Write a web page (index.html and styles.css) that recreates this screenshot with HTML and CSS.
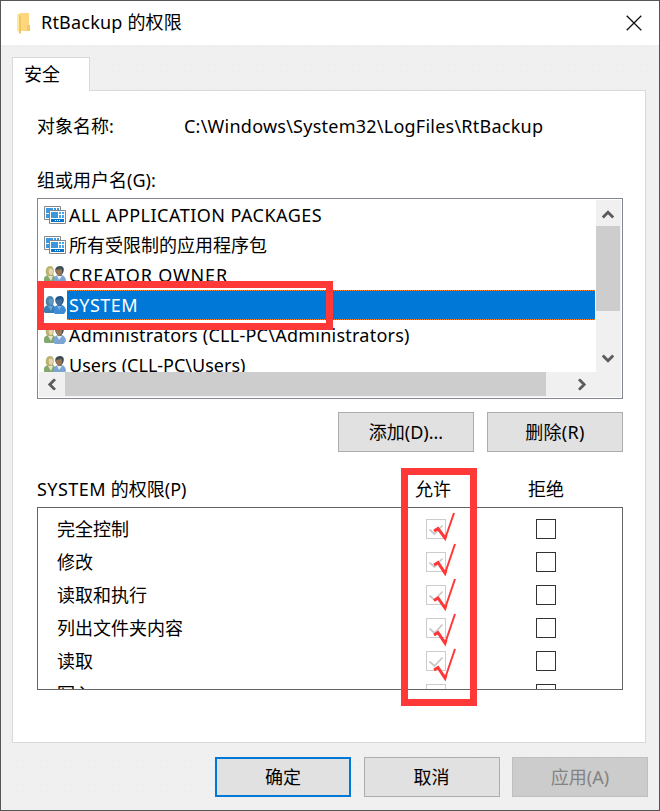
FILE: index.html
```html
<!DOCTYPE html>
<html lang="zh-CN">
<head>
<meta charset="utf-8">
<title>RtBackup 的权限</title>
<link rel="stylesheet" href="styles.css">
</head>
<body>
<svg class="defs" width="0" height="0">
  <symbol id="package" viewBox="0 0 22 18">
    <path d="M.5 .5h16v13h-16z" fill="#fff" stroke="#858585"/>
    <path d="M2 2h7v5H2zM2 8h4v4H2z" fill="#3a96dd"/><path d="M10 2h2v2h-2zM13 2h2v2h-2z" fill="#3a96dd"/>
    <path d="M5.500 4.500h16v13h-16z" fill="#fff" stroke="#858585"/>
    <path d="M7 6h7v6H7z" fill="#3a96dd"/><path d="M15 6h2v2h-2zM18 6h2v2h-2zM15 9h2v3h-2zM18 9h2v3h-2z" fill="#4aa5e5"/>
    <path d="M7 13h13v3H7z" fill="#0874c9"/><path d="M11 14h1v1h-1zM13 14h1v1h-1zM15 14h1v1h-1z" fill="#fff"/>
  </symbol>
  <symbol id="users" viewBox="0 0 22 18">
    <path d="M0 16v-3c0-2 1-3 4-4h5c2 1 3 3 3 8H1z" fill="#83a86d"/>
    <path d="M2 8C1 3 3 0 6 0s5 3 3 9l-4 2z" fill="#b9b36f"/>
    <path d="M5 3c2-1 4 0 4 2s-1 4-2 4-3-2-2-6z" fill="#e9d4b4"/>
    <path d="M4 10l3 5 2-5z" fill="#ece3cf"/>
    <path d="M10 17v-4c0-2 2-4 5-4h3c3 1 4 4 4 6l-2 3h-9z" fill="#7da5d3"/>
    <path d="M12 7c-2-4 0-7 4-7 3 0 5 2 3 7l-3 4z" fill="#3f4f55"/>
    <path d="M12 4c2 0 3-1 5-1 2 2 1 6-1 7-2 0-4-2-4-6z" fill="#9b7550"/>
    <path d="M13 10l2 4 3-4z" fill="#e6eef5"/>
  </symbol>
  <symbol id="users-selected" viewBox="0 0 22 18">
    <path d="M0 16v-3c0-2 1-3 4-4h5c2 1 3 3 3 8H1z" fill="#397eb2"/>
    <path d="M2 8C1 3 3 0 6 0s5 3 3 9l-4 2z" fill="#4b83a9"/>
    <path d="M5 3c2-1 4 0 4 2s-1 4-2 4-3-2-2-6z" fill="#629bc0"/>
    <path d="M4 10l3 5 2-5z" fill="#6ca6d4"/>
    <path d="M10 17v-4c0-2 2-4 5-4h3c3 1 4 4 4 6l-2 3h-9z" fill="#3d8dd6"/>
    <path d="M12 7c-2-4 0-7 4-7 3 0 5 2 3 7l-3 4z" fill="#20568c"/>
    <path d="M12 4c2 0 3-1 5-1 2 2 1 6-1 7-2 0-4-2-4-6z" fill="#416f98"/>
    <path d="M13 10l2 4 3-4z" fill="#72b2e9"/>
  </symbol>
  <symbol id="up" viewBox="0 0 12 9"><path d="M.8 7.500L6 2.300l5.200 5.200" fill="none" stroke="#5c5c5c" stroke-width="2.800"/></symbol>
  <symbol id="down" viewBox="0 0 12 9"><path d="M.8 1.500L6 6.700l5.200-5.200" fill="none" stroke="#5c5c5c" stroke-width="2.800"/></symbol>
  <symbol id="tick" viewBox="0 0 18 18"><path d="M2.500 9.500l5 4.500 8-8.500" fill="none" stroke="#c8c8c8" stroke-width="1.700"/></symbol>
</svg>
<div class="window">
  <header class="titlebar">
    <svg class="folder" width="15" height="21" viewBox="0 0 15 21"><path d="M1 1l4-1v19l-4-1z" fill="#ffe8a0"/><path d="M4 0h9v12l1 1v5H4z" fill="#fcd77d"/><path d="M3 1l2 3v16l-2 1z" fill="#f4c45e"/><path d="M11 12h3v6h-3z" fill="#f5c866"/></svg>
    <h1 class="title">RtBackup 的权限</h1>
    <svg class="close" width="16" height="16" viewBox="0 0 16 16"><path d="M.7 .7l14.600 14.600M15.300 .7L.7 15.300" stroke="#111" stroke-width="1.300"/></svg>
  </header>
  <div class="tab">安全</div>
  <main class="panel">
    <div class="object"><span class="object-label">对象名称:</span><span class="path">C:\Windows\System32\LogFiles\RtBackup</span></div>
    <div class="group-label">组或用户名(G):</div>
    <div class="list">
      <div class="list-main">
        <ul class="rows">
          <li><svg><use href="#package"/></svg><span class="name caps">ALL APPLICATION PACKAGES</span></li>
          <li><svg><use href="#package"/></svg><span class="name">所有受限制的应用程序包</span></li>
          <li><svg><use href="#users"/></svg><span class="name creator">CREATOR OWNER</span></li>
          <li class="selected"><svg><use href="#users-selected"/></svg><span class="name caps">SYSTEM</span></li>
          <li><svg><use href="#users"/></svg><span class="name path">Administrators (CLL-PC\Administrators)</span></li>
          <li><svg><use href="#users"/></svg><span class="name">Users (CLL-PC\Users)</span></li>
        </ul>
        <div class="vbar"><svg class="arrow"><use href="#up"/></svg><div class="thumb"></div><svg class="arrow end"><use href="#down"/></svg></div>
      </div>
      <div class="hbar"><svg class="arrow left"><use href="#up"/></svg><div class="hthumb"></div><svg class="arrow right"><use href="#up"/></svg></div>
      <div class="mark mark-user"></div>
    </div>
    <div class="actions"><button>添加(D)...</button><button class="remove">删除(R)</button></div>
    <div class="perm-area">
      <div class="perm-head"><span class="perm-title"><span class="caps">SYSTEM</span> 的权限(P)</span><span class="allow">允许</span><span class="deny">拒绝</span></div>
      <div class="perms">
        <ul class="perm-rows">
          <li><span>完全控制</span><i class="box off"><svg><use href="#tick"/></svg></i><i class="box"></i></li>
          <li><span>修改</span><i class="box off"><svg><use href="#tick"/></svg></i><i class="box"></i></li>
          <li><span>读取和执行</span><i class="box off"><svg><use href="#tick"/></svg></i><i class="box"></i></li>
          <li><span>列出文件夹内容</span><i class="box off"><svg><use href="#tick"/></svg></i><i class="box"></i></li>
          <li><span>读取</span><i class="box off"><svg><use href="#tick"/></svg></i><i class="box"></i></li>
          <li><span>写入</span><i class="box off"></i><i class="box"></i></li>
        </ul>
        <div class="vbar"><svg class="arrow"><use href="#up"/></svg><div class="thumb"></div><svg class="arrow end"><use href="#down"/></svg></div>
      </div>
      <div class="mark mark-allow"></div>
      <svg class="checks" width="30" height="180" viewBox="430 507 30 180" fill="none" stroke="#ff3838" stroke-width="2">
        <path d="M445 539L454 513M445 573.500L455 544M445 608.500L455 579M445 643.500L455 614M445 678.500L455 649"/>
        <path stroke-width="3" d="M434 531l4-2.500 7 9.500 1-3M434 565l4-2.500 7 10.500 1-3M434 600.500l4-2.500 7 10 1-3M434 635l4-2.500 7 10.500 1-3M434 670l4-2.500 7 10.500 1-3"/>
      </svg>
    </div>
  </main>
  <footer class="footer"><button class="primary">确定</button><button>取消</button><button class="disabled" disabled>应用(A)</button></footer>
</div>
</body>
</html>
```
FILE: styles.css
```css
* { box-sizing: border-box; }
body { margin: 0; font: 18px/30px "Noto Sans", "Noto Sans CJK SC", sans-serif; color: #000; }
.defs { display: block; height: 0; width: 0; }
ul, h1 { margin: 0; padding: 0; list-style: none; }
.window {
  width: 660px; height: 811px; border: 1px solid #555; overflow: hidden;
  background: #f0f0f0 radial-gradient(circle at 3.500px 3.500px, #e9e9e9 .7px, transparent .8px) 0 0 / 6px 6px;
}
.titlebar { display: flex; align-items: center; height: 44px; padding: 0 17px 0 15px; background: #fff; }
.title { font-size: 18px; font-weight: inherit; margin: -2px 0 0 10px; letter-spacing: .2px; }
.close { margin-left: auto; }
.tab {
  position: relative; width: 78px; height: 34px; margin: 12px 0 -1px 11px; padding-left: 11px; line-height: 33px;
  background: #fff; border: 1px solid #d9d9d9; border-bottom: 0;
}
.panel { width: 634px; height: 653px; margin-left: 11px; padding: 20px 22px 0 24px; background: #fff; border: 1px solid #d9d9d9; }
.object { display: flex; }
.object-label { width: 147px; }
.path { letter-spacing: .24px; }
.caps { letter-spacing: .47px; }
.creator { letter-spacing: .85px; }
.group-label { margin-top: 24px; height: 33px; }
.list { position: relative; width: 586px; height: 201px; border: 1px solid #828790; padding: 1px; }
.list-main { display: flex; height: 173px; }
.rows { flex: 1; height: 172px; overflow: hidden; padding-right: 1px; }
.rows li { display: flex; align-items: center; height: 30px; padding-left: 5px; }
.rows svg { flex: none; width: 22px; height: 18px; margin-right: 1px; }
.name { flex: 1; height: 30px; padding-left: 2px; white-space: nowrap; }
.selected .name { background: #0078d7; color: #fff; border-block: 1px dotted #ff8728; line-height: 28px; }
.vbar { display: flex; flex-direction: column; align-items: flex-start; width: 25px; background: #f0f0f0; }
.arrow { width: 12px; height: 9px; margin: 10px 0 7px 6px; flex: none; }
.thumb { width: 24px; height: 85px; background: #cdcdcd; }
.end { margin: auto 0 10px 6px; }
.hbar { display: flex; align-items: flex-start; height: 25px; margin-top: -1px; background: #f0f0f0; }
.hthumb { width: 481px; height: 24px; background: #cdcdcd; }
.left { transform: rotate(-90deg); margin: 8px 7px; }
.right { transform: rotate(90deg); margin: 8px 0 0 30px; }
.mark { position: absolute; border: 7px solid #ff3838; }
.mark-user { left: -1px; top: 82px; width: 296px; height: 49px; }
.actions { display: flex; justify-content: flex-end; gap: 13px; margin-top: 13px; width: 586px; }
button { width: 136px; height: 40px; padding: 0; font: inherit; color: #000; background: #e1e1e1; border: 1px solid #adadad; border-radius: 0; }
.remove { letter-spacing: .3px; }
.perm-area { position: relative; width: 586px; margin-top: 22px; }
.perm-head { display: flex; height: 33px; }
.perm-title { width: 378px; }
.allow { width: 113px; }
.perms { display: flex; height: 183px; border: 1px solid #646464; overflow: hidden; }
.perm-rows { flex: 1; padding: 4px 0 0 19px; }
.perm-rows li { display: flex; align-items: center; height: 33px; }
.perm-rows span { width: 369px; }
.box { display: block; width: 20px; height: 20px; border: 1px solid #333; margin-right: 90px; }
.box.off { border-color: #ccc; }
.box svg { display: block; width: 18px; height: 18px; }
.perms .thumb { height: 97px; }
.perms .end { margin-bottom: 8px; }
.mark-allow { left: 364px; top: -6px; width: 76px; height: 238px; }
.checks { position: absolute; left: 393px; top: 33px; }
.footer { display: flex; justify-content: flex-end; padding: 14px 11px 0 0; gap: 12.500px; }
.primary { border: 2px solid #0078d7; }
.disabled { background: #ccc; border-color: #bfbfbf; color: #838383; }
```
